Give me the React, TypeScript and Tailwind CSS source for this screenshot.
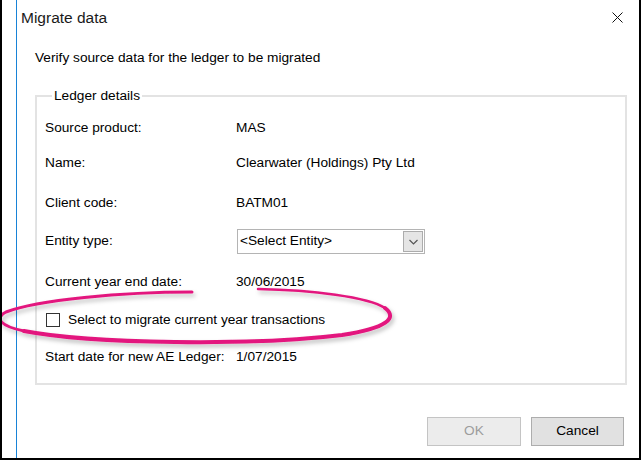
import React from "react";

const font = { fontFamily: "'Liberation Sans', Arial, sans-serif" };

function Row({ label, children, className }: { label: string; children: React.ReactNode; className: string }) {
  return (
    <div className={`flex items-center ${className}`}>
      <div className="w-[191px] shrink-0">{label}</div>
      <div className="flex items-center">{children}</div>
    </div>
  );
}

export default function App() {
  return (
    <div className="relative w-[641px] h-[460px] flex bg-white border-l-2 border-r-2 border-b-2 border-black text-black overflow-hidden" style={font}>
      <div className="w-[14px] shrink-0" />
      <div className="flex-1 flex flex-col border-l border-[#1883d7]">
        {/* title bar */}
        <div className="h-[36px] flex items-center justify-between pl-[4px] pr-[16px]">
          <span className="text-[15.5px] text-[#1a1a1a]">Migrate data</span>
          <svg width="11" height="11" viewBox="0 0 11 11" className="mt-[-2px]">
            <path d="M0.5 0.5 L10.5 10.5 M10.5 0.5 L0.5 10.5" stroke="#111" strokeWidth="1" />
          </svg>
        </div>

        <div className="mt-[14px] h-[16px] leading-4 pl-[18px] text-[13.7px]">
          Verify source data for the ledger to be migrated
        </div>

        <fieldset className="mt-[22px] ml-[18px] mr-[12px] border-2 border-solid border-[#e3e3e3] pl-[8px] pt-[10px] pb-[12px] text-[13.7px]">
          <legend className="ml-[7px] px-[2px] leading-4">Ledger details</legend>

          <Row label="Source product:" className="h-[28px]">MAS</Row>
          <Row label="Name:" className="h-[28px] mt-[7px]">Clearwater (Holdings) Pty Ltd</Row>
          <Row label="Client code:" className="h-[28px] mt-[12px]">BATM01</Row>
          <Row label="Entity type:" className="h-[25px] mt-[12px]">
            <div className="ml-[1px] w-[188px] h-[25px] flex border border-[#b4b4b4] bg-white">
              <div className="flex-1 flex items-center pl-[2px]">&lt;Select Entity&gt;</div>
              <div className="w-[20px] m-[1px] flex items-center justify-center bg-[#e5e5e5] border border-[#acacac]">
                <svg width="9" height="6" viewBox="0 0 9 6">
                  <path d="M0.5 1 L4.5 5 L8.5 1" fill="none" stroke="#555" strokeWidth="1.2" />
                </svg>
              </div>
            </div>
          </Row>
          <Row label="Current year end date:" className="h-[28px] mt-[14px]">30/06/2015</Row>
          <div className="h-[28px] mt-[10px] flex items-center">
            <div className="ml-[1px] w-[14px] h-[14px] border border-[#333] bg-white" />
            <span className="ml-[8px]">Select to migrate current year transactions</span>
          </div>
          <Row label="Start date for new AE Ledger:" className="h-[28px] mt-[9px]">1/07/2015</Row>
        </fieldset>

        <div className="mt-[32px] flex justify-end gap-[10px] pr-[15px] text-[13.7px]">
          <button className="w-[94px] h-[29px] bg-[#ececec] border border-[#c4c4c4] text-[#9c9c9c]">OK</button>
          <button className="w-[93px] h-[29px] bg-[#e1e1e1] border border-[#adadad] text-black">Cancel</button>
        </div>
      </div>

      {/* hand-drawn highlight */}
      <svg className="absolute inset-0 pointer-events-none" width="641" height="460" viewBox="0 0 641 460">
        <defs>
          <filter id="sh" x="-10%" y="-30%" width="120%" height="160%">
            <feDropShadow dx="2" dy="3" stdDeviation="2" floodColor="#000" floodOpacity="0.25" />
          </filter>
        </defs>
        <g filter="url(#sh)" fill="none" stroke="#e3177e" strokeLinecap="round">
          <path d="M190 292 C120 292 35 300 4 312 C-8 318 -2 326 22 331" strokeWidth="3" />
          <path d="M22 331 C90 344 250 346 340 335 C385 328 396 318 383 308" strokeWidth="4" />
          <path d="M383 308 C366 297 310 290 256 289" strokeWidth="2.5" />
        </g>
      </svg>
    </div>
  );
}
